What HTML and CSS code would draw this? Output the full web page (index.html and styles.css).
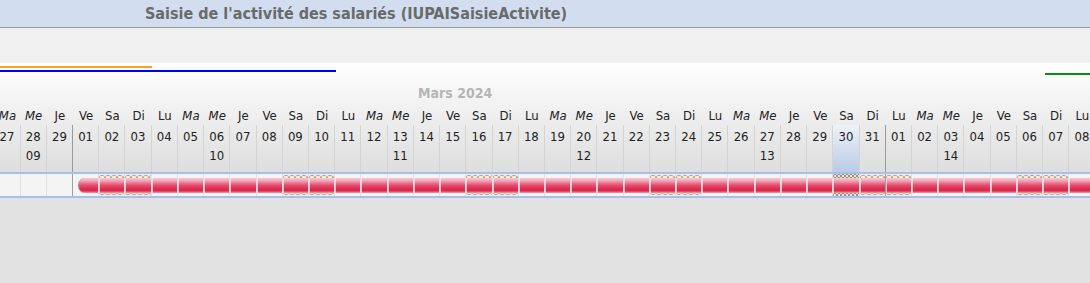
FILE: index.html
```html
<!DOCTYPE html>
<html lang="fr">
<head>
<meta charset="utf-8">
<title>Saisie de l'activité des salariés</title>
<link rel="stylesheet" href="styles.css">
</head>
<body>
<header class="title-bar"><h1 class="title">Saisie de l'activité des salariés (IUPAISaisieActivite)</h1></header>
<div class="toolbar"></div>
<section class="gantt">
  <div class="indicators">
    <div class="ind ind-orange"></div>
    <div class="ind ind-blue"></div>
    <div class="ind ind-green"></div>
  </div>
  <div class="timeline">
    <div class="months">
      <div class="month m-feb"></div>
      <div class="month m-mar">Mars 2024</div>
      <div class="month m-apr"></div>
    </div>
    <div class="days">
      <div class="day"><div class="dn it">Ma</div><div class="dd"><div>27</div><div></div></div></div>
      <div class="day"><div class="dn it">Me</div><div class="dd"><div>28</div><div>09</div></div></div>
      <div class="day"><div class="dn">Je</div><div class="dd mend"><div>29</div><div></div></div></div>
      <div class="day"><div class="dn">Ve</div><div class="dd"><div>01</div><div></div></div></div>
      <div class="day"><div class="dn">Sa</div><div class="dd"><div>02</div><div></div></div></div>
      <div class="day"><div class="dn">Di</div><div class="dd"><div>03</div><div></div></div></div>
      <div class="day"><div class="dn">Lu</div><div class="dd"><div>04</div><div></div></div></div>
      <div class="day"><div class="dn it">Ma</div><div class="dd"><div>05</div><div></div></div></div>
      <div class="day"><div class="dn it">Me</div><div class="dd"><div>06</div><div>10</div></div></div>
      <div class="day"><div class="dn">Je</div><div class="dd"><div>07</div><div></div></div></div>
      <div class="day"><div class="dn">Ve</div><div class="dd"><div>08</div><div></div></div></div>
      <div class="day"><div class="dn">Sa</div><div class="dd"><div>09</div><div></div></div></div>
      <div class="day"><div class="dn">Di</div><div class="dd"><div>10</div><div></div></div></div>
      <div class="day"><div class="dn">Lu</div><div class="dd"><div>11</div><div></div></div></div>
      <div class="day"><div class="dn it">Ma</div><div class="dd"><div>12</div><div></div></div></div>
      <div class="day"><div class="dn it">Me</div><div class="dd"><div>13</div><div>11</div></div></div>
      <div class="day"><div class="dn">Je</div><div class="dd"><div>14</div><div></div></div></div>
      <div class="day"><div class="dn">Ve</div><div class="dd"><div>15</div><div></div></div></div>
      <div class="day"><div class="dn">Sa</div><div class="dd"><div>16</div><div></div></div></div>
      <div class="day"><div class="dn">Di</div><div class="dd"><div>17</div><div></div></div></div>
      <div class="day"><div class="dn">Lu</div><div class="dd"><div>18</div><div></div></div></div>
      <div class="day"><div class="dn it">Ma</div><div class="dd"><div>19</div><div></div></div></div>
      <div class="day"><div class="dn it">Me</div><div class="dd"><div>20</div><div>12</div></div></div>
      <div class="day"><div class="dn">Je</div><div class="dd"><div>21</div><div></div></div></div>
      <div class="day"><div class="dn">Ve</div><div class="dd"><div>22</div><div></div></div></div>
      <div class="day"><div class="dn">Sa</div><div class="dd"><div>23</div><div></div></div></div>
      <div class="day"><div class="dn">Di</div><div class="dd"><div>24</div><div></div></div></div>
      <div class="day"><div class="dn">Lu</div><div class="dd"><div>25</div><div></div></div></div>
      <div class="day"><div class="dn it">Ma</div><div class="dd"><div>26</div><div></div></div></div>
      <div class="day"><div class="dn it">Me</div><div class="dd"><div>27</div><div>13</div></div></div>
      <div class="day"><div class="dn">Je</div><div class="dd"><div>28</div><div></div></div></div>
      <div class="day"><div class="dn">Ve</div><div class="dd"><div>29</div><div></div></div></div>
      <div class="day"><div class="dn">Sa</div><div class="dd today"><div>30</div><div></div></div></div>
      <div class="day"><div class="dn">Di</div><div class="dd mend"><div>31</div><div></div></div></div>
      <div class="day"><div class="dn">Lu</div><div class="dd"><div>01</div><div></div></div></div>
      <div class="day"><div class="dn it">Ma</div><div class="dd"><div>02</div><div></div></div></div>
      <div class="day"><div class="dn it">Me</div><div class="dd"><div>03</div><div>14</div></div></div>
      <div class="day"><div class="dn">Je</div><div class="dd"><div>04</div><div></div></div></div>
      <div class="day"><div class="dn">Ve</div><div class="dd"><div>05</div><div></div></div></div>
      <div class="day"><div class="dn">Sa</div><div class="dd"><div>06</div><div></div></div></div>
      <div class="day"><div class="dn">Di</div><div class="dd"><div>07</div><div></div></div></div>
      <div class="day"><div class="dn">Lu</div><div class="dd"><div>08</div><div></div></div></div>
    </div>
  </div>
</section>
<div class="row-wrap">
  <div class="row">
    <div class="cell"></div>
    <div class="cell"></div>
    <div class="cell mend"></div>
    <div class="cell"><div class="seg first"></div></div>
    <div class="cell we"><div class="seg"></div></div>
    <div class="cell we"><div class="seg"></div></div>
    <div class="cell"><div class="seg"></div></div>
    <div class="cell"><div class="seg"></div></div>
    <div class="cell"><div class="seg"></div></div>
    <div class="cell"><div class="seg"></div></div>
    <div class="cell"><div class="seg"></div></div>
    <div class="cell we"><div class="seg"></div></div>
    <div class="cell we"><div class="seg"></div></div>
    <div class="cell"><div class="seg"></div></div>
    <div class="cell"><div class="seg"></div></div>
    <div class="cell"><div class="seg"></div></div>
    <div class="cell"><div class="seg"></div></div>
    <div class="cell"><div class="seg"></div></div>
    <div class="cell we"><div class="seg"></div></div>
    <div class="cell we"><div class="seg"></div></div>
    <div class="cell"><div class="seg"></div></div>
    <div class="cell"><div class="seg"></div></div>
    <div class="cell"><div class="seg"></div></div>
    <div class="cell"><div class="seg"></div></div>
    <div class="cell"><div class="seg"></div></div>
    <div class="cell we"><div class="seg"></div></div>
    <div class="cell we"><div class="seg"></div></div>
    <div class="cell"><div class="seg"></div></div>
    <div class="cell"><div class="seg"></div></div>
    <div class="cell"><div class="seg"></div></div>
    <div class="cell"><div class="seg"></div></div>
    <div class="cell"><div class="seg"></div></div>
    <div class="cell we today"><div class="seg"></div></div>
    <div class="cell we mend"><div class="seg"></div></div>
    <div class="cell we"><div class="seg"></div></div>
    <div class="cell"><div class="seg"></div></div>
    <div class="cell"><div class="seg"></div></div>
    <div class="cell"><div class="seg"></div></div>
    <div class="cell"><div class="seg"></div></div>
    <div class="cell we"><div class="seg"></div></div>
    <div class="cell we"><div class="seg"></div></div>
    <div class="cell"><div class="seg"></div></div>
  </div>
</div>
</body>
</html>
```
FILE: styles.css
```css
html, body {
  margin: 0;
  padding: 0;
}
body {
  width: 1090px;
  height: 283px;
  overflow: hidden;
  background: #e2e2e2;
  font-family: "DejaVu Sans Condensed", "DejaVu Sans", sans-serif;
  color: #222;
}
.title-bar {
  height: 27px;
  background: #d2deef;
  border-bottom: 1px solid #9c9c9c;
}
.title {
  margin: 0;
  padding-left: 145px;
  font-size: 16px;
  font-weight: bold;
  line-height: 27px;
  color: #6a6a6a;
}
.toolbar {
  height: 35px;
  background: #f0f0f0;
}
.gantt {
  --col: 26.22px;
  background: linear-gradient(#ffffff, #f6f6f6 25%, #dedede);
  overflow: hidden;
  height: 109px;
}
.indicators {
  padding-top: 3px;
}
.ind {
  height: 2px;
}
.ind-orange {
  width: 152px;
  background: #f5a623;
}
.ind-blue {
  width: 336px;
  margin-top: 2px;
  background: #0000f0;
}
.ind-green {
  width: 45px;
  margin-top: 1px;
  margin-left: 1045px;
  background: #108a10;
}
.timeline {
  margin-left: -5.66px;
}
.months {
  display: grid;
  grid-template-columns: repeat(42, var(--col));
  height: 31px;
}
.m-feb { grid-column: span 3; }
.m-mar {
  grid-column: span 31;
  padding-left: 345px;
  padding-top: 10px;
  font-size: 14px;
  font-weight: bold;
  color: #b5b5b5;
  white-space: nowrap;
}
.m-apr { grid-column: span 8; }
.days {
  display: grid;
  grid-template-columns: repeat(42, var(--col));
}
.day {
  text-align: center;
  font-size: 13px;
}
.dn {
  height: 19px;
  line-height: 19px;
}
.dn.it {
  font-style: italic;
}
.dd {
  height: 47px;
  border-right: 1px solid #d4d4d4;
  box-sizing: border-box;
  line-height: 19px;
  padding-top: 2px;
}
.dd > div {
  height: 19px;
}
.dd.mend {
  border-right-color: #9a9a9a;
}
.dd.today {
  background: linear-gradient(#eef2f9, #b9cbe6);
}
.row-wrap {
  --col: 26.22px;
  border-top: 2px solid #a6bff0;
  border-bottom: 2px solid #a6bff0;
  overflow: hidden;
}
.row {
  display: grid;
  grid-template-columns: repeat(42, var(--col));
  height: 22px;
  margin-left: -5.66px;
}
.cell {
  background: #f4f4f4;
  border-right: 1px solid #e0e0e0;
  padding-top: 4px;
}
.cell.mend {
  border-right-color: #a0a0a0;
}
.cell.we {
  background-color: #f8ecda;
  background-image:
    radial-gradient(circle at 3px 4px, transparent 2px, #aaa39a 2.6px, transparent 3.4px),
    radial-gradient(circle at 3px -1px, transparent 2px, #aaa39a 2.6px, transparent 3.4px);
  background-size: 6px 4px, 6px 3px;
  background-position: 0 0, 0 19px;
  background-repeat: repeat-x, repeat-x;
}
.cell.today {
  background-color: #f0e6d4;
  background-image:
    radial-gradient(circle at 2px 2px, transparent 1px, #8c857c 1.5px, transparent 2.2px),
    radial-gradient(circle at 2px 2px, transparent 1px, #8c857c 1.5px, transparent 2.2px);
  background-size: 4px 4px, 4px 3px;
}
.seg {
  height: 15px;
  box-sizing: border-box;
  border-left: 1px solid rgba(255, 235, 240, 0.7);
  background: linear-gradient(#f7cbd5, #ee9cae 22%, #e55675 45%, #dd2d50 70%, #d9284b 85%, #eba0b0);
}
.seg.first {
  margin-left: 5px;
  border-left: 1px solid #b98a94;
  border-radius: 7px 0 0 7px;
}
```
